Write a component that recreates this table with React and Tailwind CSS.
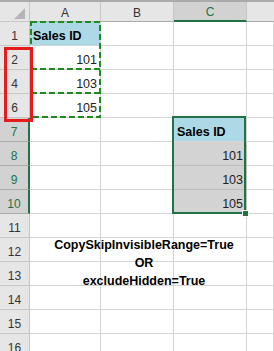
import React from "react";

/* ── DATA ─────────────────────────────────────────────────────────────── */
const rows = [
  { n: "1", a: { text: "Sales ID", head: true } },
  { n: "2", a: { text: "101" } },
  { n: "4", a: { text: "103" } },
  { n: "6", a: { text: "105" } },
  { n: "7", sel: true, c: { text: "Sales ID", head: true } },
  { n: "8", sel: true, c: { text: "101", shade: true } },
  { n: "9", sel: true, c: { text: "103", shade: true } },
  { n: "10", sel: true, c: { text: "105", shade: true } },
  { n: "11" },
  { n: "12" },
  { n: "13" },
  { n: "14" },
  { n: "15" },
  { n: "16" },
];

/* ── CELLS ────────────────────────────────────────────────────────────── */
const Cell = ({ cell }) => {
  if (!cell) return <div className="border-r border-b border-[#d4d4d4] bg-white" />;
  if (cell.head)
    return (
      <div className="flex items-end border-r border-b border-[#d4d4d4] bg-[#add8e6] pb-[1px] pl-[3px] text-[12.5px] leading-[16px] font-bold text-black">
        {cell.text}
      </div>
    );
  return (
    <div
      className={
        cell.shade
          ? "flex items-end justify-end border-r border-b border-[#bdbdbd] bg-[#d3d3d3] pr-[3px] pb-[1px] text-[12.5px] leading-[16px] text-[#222]"
          : "flex items-end justify-end border-r border-b border-[#d4d4d4] bg-white pr-[3px] pb-[1px] text-[12.5px] leading-[16px] text-[#222]"
      }
    >
      {cell.text}
    </div>
  );
};

const Row = ({ r }) => (
  <div className="grid h-[24px] grid-cols-[30px_71px_73px_73px_1fr]">
    <div
      className={
        r.sel
          ? "flex items-end justify-center border-r-2 border-b border-r-[#217346] border-b-[#ababab] bg-[#d2d2d2] pb-[1px] text-[12px] leading-[16px] text-[#217346]"
          : "flex items-end justify-center border-r border-b border-[#c6c6c6] bg-[#e6e6e6] pb-[1px] text-[12px] leading-[16px] text-[#333]"
      }
    >
      {r.n}
    </div>
    <Cell cell={r.a} />
    <Cell cell={r.b} />
    <Cell cell={r.c} />
    <Cell cell={r.d} />
  </div>
);

/* ══════════════════════════════════════════════════════════════════════
   SHEET
   ══════════════════════════════════════════════════════════════════════ */
export default function App() {
  return (
    <div className="relative h-[351px] w-[274px] overflow-hidden bg-white font-['Liberation_Sans',Arial,sans-serif]">
      {/* column headers */}
      <div className="grid h-[22px] grid-cols-[30px_71px_73px_73px_1fr] border-t-2 border-[#ababab]">
        <div className="relative border-r border-b border-[#c6c6c6] bg-[#e6e6e6]">
          <svg className="absolute top-[6px] left-[14px]" width="12" height="12" viewBox="0 0 12 12">
            <polygon points="11,0 11,11 0,11" fill="#b5b5b5" />
          </svg>
        </div>
        <div className="flex items-end justify-center border-r border-b border-r-[#c6c6c6] border-b-[#ababab] bg-[#e6e6e6] text-[12px] leading-[16px] text-[#333]">
          A
        </div>
        <div className="flex items-end justify-center border-r border-b border-r-[#c6c6c6] border-b-[#ababab] bg-[#e6e6e6] text-[12px] leading-[16px] text-[#333]">
          B
        </div>
        <div className="flex items-end justify-center border-r border-b-2 border-r-[#c6c6c6] border-b-[#217346] bg-[#d2d2d2] text-[12px] leading-[16px] text-[#217346]">
          C
        </div>
        <div className="border-b border-[#ababab] bg-[#e6e6e6]" />
      </div>

      {rows.map((r) => (
        <Row key={r.n} r={r} />
      ))}

      {/* copy marquee around A1:A6 */}
      <svg className="pointer-events-none absolute top-0 left-0" width="274" height="351">
        <g stroke="#1f8a1f" strokeWidth="2" strokeDasharray="6 3" fill="none">
          <rect x="31" y="22" width="69" height="95" />
          <line x1="31" y1="69" x2="100" y2="69" />
          <line x1="31" y1="93" x2="100" y2="93" />
        </g>
      </svg>

      {/* red highlight on row numbers */}
      <div className="pointer-events-none absolute top-[47px] left-[4px] h-[75px] w-[29px] border-[3px] border-[#e51c1c]" />

      {/* selection C7:C10 */}
      <div className="pointer-events-none absolute top-[116px] left-[172px] h-[98px] w-[74px] border-2 border-[#217346]" />
      <div className="absolute top-[210px] left-[242px] h-[7px] w-[7px] border border-white bg-[#217346]" />

      {/* note text */}
      <div className="pointer-events-none absolute top-[236px] left-[30px] w-[228px] text-center text-[12.5px] leading-[18px] font-bold text-black">
        <div>CopySkipInvisibleRange=True</div>
        <div>OR</div>
        <div>excludeHidden=True</div>
      </div>
    </div>
  );
}
